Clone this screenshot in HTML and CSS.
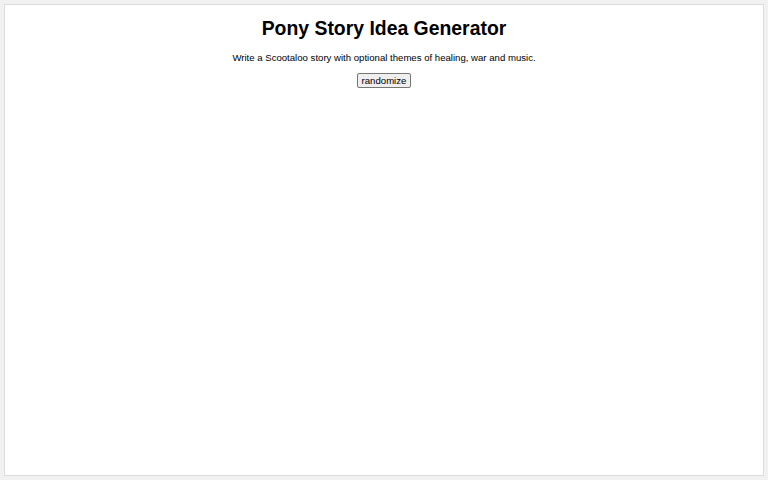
FILE: index.html
```html
<!DOCTYPE html>
<html>
<head>
<meta charset="utf-8">
<link rel="stylesheet" href="styles.css">
</head>
<body>
<div class="panel">
  <h1 class="title">Pony Story Idea Generator</h1>
  <p class="prompt">Write a Scootaloo story with optional themes of healing, war and music.</p>
  <button class="btn">randomize</button>
</div>
</body>
</html>
```
FILE: styles.css
```css
html, body { margin: 0; padding: 0; }
body {
  background: #f1f1f1;
  font-family: "Liberation Sans", Arial, sans-serif;
  padding: 4px 4px;
  height: 480px;
  box-sizing: border-box;
}
.panel {
  background: #fff;
  border: 1px solid #dcdcdc;
  height: 472px;
  box-sizing: border-box;
  display: flex;
  flex-direction: column;
  align-items: center;
  padding-top: 12px;
}
.title {
  margin: 0;
  font-size: 19.4px;
  line-height: 22px;
  font-weight: bold;
  color: #000;
}
.prompt {
  margin: 13px 0 0;
  font-size: 9.6px;
  line-height: 12px;
  color: #000;
}
.btn {
  margin-top: 9px;
  font-family: "Liberation Sans", Arial, sans-serif;
  font-size: 9.6px;
  line-height: 12px;
  height: 15px;
  padding: 0 4px;
  background: #efefef;
  border: 1px solid #767676;
  border-radius: 2px;
  color: #000;
  box-sizing: border-box;
}
```
